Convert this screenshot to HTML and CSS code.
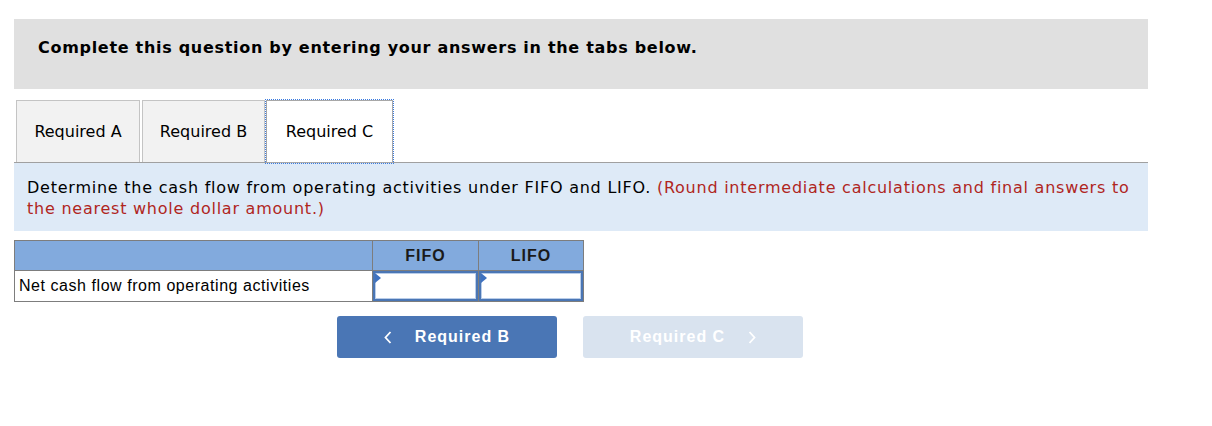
FILE: index.html
```html
<!DOCTYPE html>
<html>
<head>
<meta charset="utf-8">
<link rel="stylesheet" href="styles.css">
</head>
<body>
<div class="page">
  <div class="instr">Complete this question by entering your answers in the tabs below.</div>
  <div class="tabs">
    <div class="tab">Required A</div>
    <div class="tab">Required B</div>
    <div class="tab active">Required C</div>
  </div>
  <div class="info">Determine the cash flow from operating activities under FIFO and LIFO. <span class="red">(Round intermediate calculations and final answers to the nearest whole dollar amount.)</span></div>
  <table class="grid">
    <tr class="head">
      <th class="c1"></th>
      <th class="c2">FIFO</th>
      <th class="c3">LIFO</th>
    </tr>
    <tr>
      <td class="label">Net cash flow from operating activities</td>
      <td class="inp"><div class="box"><span class="tri"></span></div></td>
      <td class="inp"><div class="box"><span class="tri"></span></div></td>
    </tr>
  </table>
  <div class="nav">
    <div class="btn prev">
      <svg class="chev" width="8" height="13" viewBox="0 0 8 13"><path d="M6.5 1 L1.5 6.5 L6.5 12" fill="none" stroke="#fff" stroke-width="1.8"/></svg>
      <span class="btxt">Required B</span>
    </div>
    <div class="btn next">
      <span class="btxt">Required C</span>
      <svg class="chev" width="8" height="13" viewBox="0 0 8 13"><path d="M1.5 1 L6.5 6.5 L1.5 12" fill="none" stroke="#fff" stroke-width="1.8"/></svg>
    </div>
  </div>
</div>
</body>
</html>
```
FILE: styles.css
```css
html, body { margin: 0; padding: 0; background: #fff; }
.page {
  padding: 19px 0 0 14px;
  width: 1134px;
  font-family: "DejaVu Sans", Verdana, sans-serif;
  color: #000;
}
.instr {
  background: #e0e0e0;
  height: 70px;
  box-sizing: border-box;
  padding: 20px 0 0 24px;
  font-weight: bold;
  font-size: 16px;
  letter-spacing: 0.7px;
  line-height: 18px;
}
.tabs {
  display: flex;
  margin-top: 11px;
  padding-left: 2px;
  height: 62px;
  border-bottom: 1px solid #a0a0a0;
}
.tab {
  box-sizing: border-box;
  height: 62px;
  background: #f2f2f2;
  border: 1px solid #c4c4c4;
  border-bottom: none;
  display: flex;
  align-items: center;
  justify-content: center;
  font-size: 16px;
  margin-right: 2px;
}
.tab:nth-child(1) { width: 124px; }
.tab:nth-child(2) { width: 123px; margin-right: 1px; }
.tab.active {
  width: 127px;
  background: #fff;
  border: 1px solid #a8a8a8;
  outline: 1px dotted #3b7be0;
  outline-offset: 0;
  height: 63px;
}
.info {
  background: #deeaf7;
  padding: 14px 12px 12px 13px;
  font-size: 16px;
  letter-spacing: 0.76px;
  line-height: 21px;
}
.red { color: #b0261e; }
.grid {
  margin-top: 9px;
  border-collapse: collapse;
  width: 570px;
  font-family: "Liberation Sans", Arial, sans-serif;
}
.grid th, .grid td {
  border: 1px solid #7d7d7d;
  padding: 0;
}
.head th {
  background: #82aadd;
  height: 29px;
  font-size: 16px;
  letter-spacing: 1px;
  color: #1a1a1a;
  font-weight: bold;
}
.c1 { width: 357px; }
.c2 { width: 105px; }
.c3 { width: 104px; }
.label {
  height: 30px;
  font-size: 16px;
  letter-spacing: 0.55px;
  padding-left: 4px !important;
  color: #000;
}
.inp { height: 30px; }
.box {
  position: relative;
  height: 30px;
  box-sizing: border-box;
  border: 2px solid #4a76b5;
  box-shadow: inset 0 0 0 1px #b9cde9;
  background: #fff;
}
.tri {
  position: absolute;
  left: 0;
  top: 0;
  width: 0;
  height: 0;
  border-top: 5px solid transparent;
  border-bottom: 5px solid transparent;
  border-left: 6px solid #3f72c0;
}
.nav {
  display: flex;
  gap: 26px;
  margin-top: 14px;
  padding-left: 323px;
}
.btn {
  width: 220px;
  height: 42px;
  border-radius: 3px;
  display: flex;
  align-items: center;
  justify-content: center;
  font-family: "Liberation Sans", Arial, sans-serif;
  font-weight: bold;
  font-size: 16px;
  letter-spacing: 1px;
  color: #fff;
  gap: 23px;
}
.prev { background: #4a76b5; }
.next { background: #d9e3ef; }
.chev { display: block; }
```
